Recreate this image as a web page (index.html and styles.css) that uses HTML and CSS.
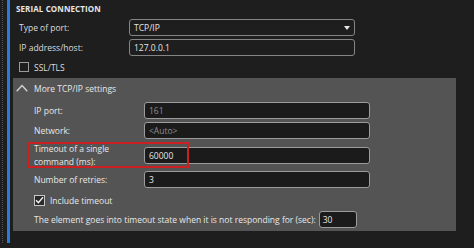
FILE: index.html
```html
<!DOCTYPE html>
<html>
<head>
<meta charset="utf-8">
<link rel="stylesheet" href="styles.css">
</head>
<body>
<div class="app">
  <div class="gutter"></div>
  <div class="accent"></div>
  <div class="content">
    <div class="section-title">SERIAL CONNECTION</div>
    <div class="form-row">
      <span class="label">Type of port:</span>
      <div class="field select">
        <span>TCP/IP</span>
        <svg class="arrow" width="6" height="4" viewBox="0 0 6 4"><path d="M0 0 H6 L3 4 Z" fill="#e8e8e8"/></svg>
      </div>
    </div>
    <div class="form-row">
      <span class="label">IP address/host:</span>
      <div class="field">127.0.0.1</div>
    </div>
    <div class="check-row top-check">
      <span class="checkbox"></span>
      <span>SSL/TLS</span>
    </div>
    <div class="panel">
      <div class="panel-head">
        <svg class="chevron" width="12" height="8" viewBox="0 0 12 8"><path d="M0.7 7.3 L6 1.5 L11.3 7.3" fill="none" stroke="#d6d6d6" stroke-width="1.3"/></svg>
        <span>More TCP/IP settings</span>
      </div>
      <div class="panel-row">
        <span class="label">IP port:</span>
        <div class="field dark muted">161</div>
      </div>
      <div class="panel-row">
        <span class="label">Network:</span>
        <div class="field dark muted">&lt;Auto&gt;</div>
      </div>
      <div class="panel-row highlighted">
        <span class="label wrap">Timeout of a single command (ms):</span>
        <div class="field dark">60000</div>
        <div class="highlight-box"></div>
      </div>
      <div class="panel-row">
        <span class="label">Number of retries:</span>
        <div class="field dark">3</div>
      </div>
      <div class="check-row panel-check">
        <span class="checkbox checked">
          <svg width="9" height="8" viewBox="0 0 9 8"><path d="M1 4.2 L3.4 6.6 L8 1.2" fill="none" stroke="#f0f0f0" stroke-width="1.4"/></svg>
        </span>
        <span>Include timeout</span>
      </div>
      <div class="timeout-row">
        <span>The element goes into timeout state when it is not responding for (sec):</span>
        <div class="field dark small">30</div>
      </div>
    </div>
  </div>
</div>
</body>
</html>
```

FILE: styles.css
```css
html, body {
  margin: 0;
  padding: 0;
  background: #1e1e1e;
}
body {
  width: 474px;
  height: 248px;
  overflow: hidden;
  font-family: "Open Sans", "Noto Sans", sans-serif;
  font-size: 8.5px;
  color: #dcdcdc;
}
.app {
  display: flex;
  height: 248px;
}
.gutter {
  width: 2px;
  margin-left: 2px;
  margin-right: 2px;
  border-left: 1px dotted #555;
  height: 243px;
}
.accent {
  width: 3px;
  height: 243px;
  background: #2b7bd6;
}
.content {
  margin-left: 3px;
  width: 443px;
  display: flex;
  flex-direction: column;
}
.section-title {
  font-weight: 700;
  font-size: 8px;
  letter-spacing: 0.1px;
  line-height: 12px;
  margin-top: 3px;
  padding-left: 3px;
  color: #e6e6e6;
}
.form-row {
  display: flex;
  align-items: center;
  padding-left: 6px;
  margin-top: 3px;
}
.section-title + .form-row {
  margin-top: 4px;
}
.label {
  width: 110px;
  flex: none;
  line-height: 13px;
}
.field {
  box-sizing: border-box;
  width: 226px;
  height: 17px;
  border: 1px solid #858585;
  border-radius: 3px;
  background: #1e1e1e;
  display: flex;
  align-items: center;
  padding-left: 4px;
  color: #e6e6e6;
}
.select {
  justify-content: space-between;
  padding-right: 4px;
}
.check-row {
  display: flex;
  align-items: center;
  gap: 5px;
}
.top-check {
  padding-left: 6px;
  height: 16px;
  margin-top: 3px;
}
.checkbox {
  box-sizing: border-box;
  width: 10px;
  height: 10px;
  border: 1px solid #9a9a9a;
  display: flex;
  align-items: center;
  justify-content: center;
}
.checkbox.checked {
  width: 11px;
  height: 11px;
  border-color: #c8c8c8;
  background: #2a2a2a;
}
.panel {
  margin-top: 3px;
  background: #545454;
  height: 153px;
  box-sizing: border-box;
  color: #e8e8e8;
  display: flex;
  flex-direction: column;
}
.panel-head {
  display: flex;
  align-items: center;
  gap: 6px;
  padding-left: 3px;
  height: 16px;
  margin-top: 2px;
  font-size: 8.5px;
}
.panel-row {
  display: flex;
  align-items: center;
  padding-left: 21px;
  margin-top: 3px;
  position: relative;
}
.panel-head + .panel-row {
  margin-top: 6px;
}
.panel .label.wrap {
  width: 96px;
  margin-right: 14px;
}
.field.dark {
  background: #1b1b1b;
  border-color: #9c9c9c;
}
.field.muted {
  color: #8e8e8e;
}
.highlight-box {
  position: absolute;
  left: 14px;
  top: 0;
  width: 162px;
  height: 26px;
  box-sizing: border-box;
  border: 2px solid #cc1f22;
  pointer-events: none;
}
.panel-check {
  padding-left: 21px;
  margin-top: 4px;
  height: 16px;
}
.timeout-row {
  display: flex;
  align-items: center;
  gap: 3px;
  padding-left: 21px;
  margin-top: 3px;
}
.field.small {
  width: 38px;
  padding-left: 3px;
}
```
